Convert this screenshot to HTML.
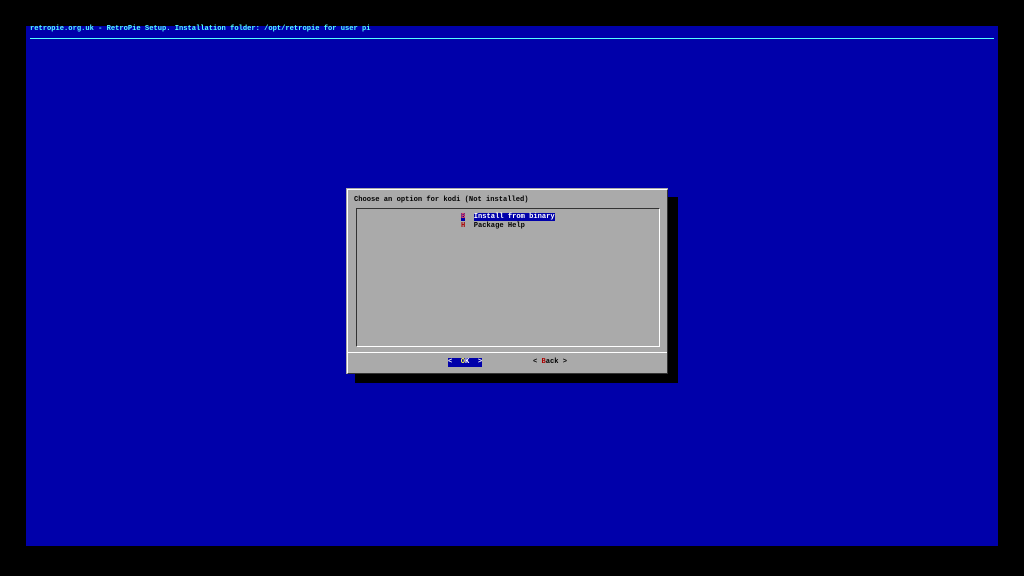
<html><head><style>
body{margin:0;width:1024px;height:576px;background:#000;position:relative;overflow:hidden;font-family:"Liberation Mono",monospace;font-size:7.1px;font-weight:bold}
.a{position:absolute;white-space:pre;line-height:9px}
</style></head><body>
<div style="position:absolute;left:26px;top:26px;width:972px;height:520px;background:#0000aa"></div>
<div class="a" style="left:30px;top:25px;color:#55ffff">retropie.org.uk - RetroPie Setup. Installation folder: /opt/retropie for user pi</div>
<div style="position:absolute;left:30px;top:38px;width:964px;height:1px;background:#55ffff"></div>
<div style="position:absolute;left:355px;top:197px;width:323px;height:186px;background:#000"></div>
<div style="position:absolute;left:346px;top:188px;width:322px;height:186px;background:#aaaaaa"></div>
<div style="position:absolute;left:347px;top:189px;width:319px;height:183px;border-top:1px solid #fff;border-left:1px solid #fff;border-right:1px solid #333;border-bottom:1px solid #333"></div>
<div class="a" style="left:354px;top:196px;color:#000">Choose an option for kodi (Not installed)</div>
<div style="position:absolute;left:356px;top:208px;width:302px;height:137px;border-top:1px solid #333;border-left:1px solid #333;border-right:1px solid #fff;border-bottom:1px solid #fff"></div>
<div class="a" style="left:461px;top:213px;color:#aa0000"><span style="background:#0000aa;color:#ff5555">B</span>  <span style="background:#0000aa;color:#fff">Install from binary</span></div>
<div class="a" style="left:461px;top:222px;color:#aa0000">H  <span style="color:#000">Package Help</span></div>
<div style="position:absolute;left:347px;top:352px;width:320px;height:1px;background:#fff"></div>
<div class="a" style="left:448px;top:358px;background:#0000aa;color:#fff">&lt;  <span style="color:#ffff55">O</span>K  &gt;</div>
<div class="a" style="left:533px;top:358px;color:#000">&lt; <span style="color:#aa0000">B</span>ack &gt;</div>
</body></html>
